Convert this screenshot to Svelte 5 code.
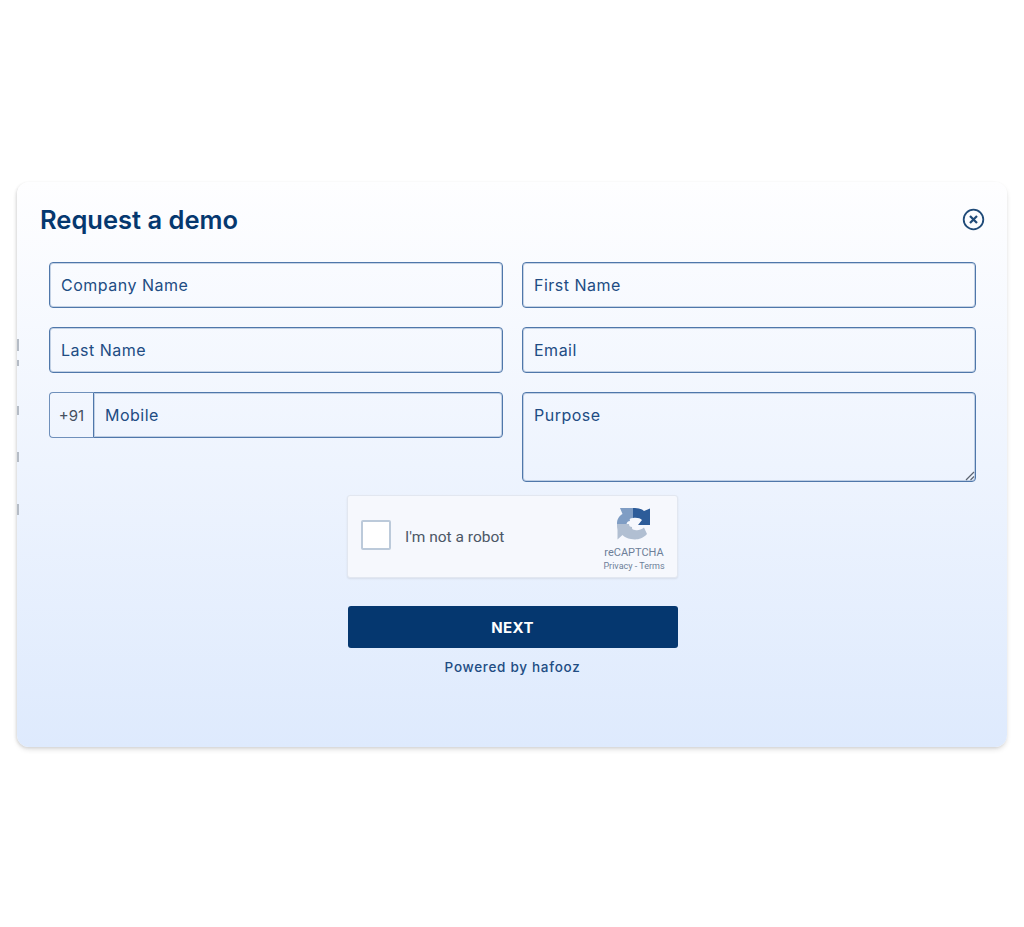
<script>
  const marks = [
    { top: 157, h: 12 },
    { top: 178, h: 6 },
    { top: 224, h: 9 },
    { top: 270, h: 10 },
    { top: 322, h: 11 }
  ];
</script>

<div class="page">
  <section class="modal">
    {#each marks as m}
      <i class="mark" style="top:{m.top}px;height:{m.h}px"></i>
    {/each}

    <header class="head">
      <h1>Request a demo</h1>
      <button class="close" aria-label="Close">
        <svg width="23" height="23" viewBox="0 0 23 23" fill="none" stroke="#1f4a78">
          <circle cx="11.5" cy="11.5" r="9.8" stroke-width="1.8" />
          <path d="M8 8l7 7M15 8l-7 7" stroke-width="2.2" />
        </svg>
      </button>
    </header>

    <form class="fields">
      <div class="field">Company Name</div>
      <div class="field">First Name</div>
      <div class="field">Last Name</div>
      <div class="field">Email</div>
      <div class="phone">
        <span class="code">+91</span>
        <div class="field mobile">Mobile</div>
      </div>
      <div class="field purpose">
        Purpose
        <svg class="grip" width="10" height="10" viewBox="0 0 10 10" stroke="#5c6470" stroke-width="1.2">
          <path d="M1 9L9 1M5.500 9L9 5.500" />
        </svg>
      </div>
    </form>

    <div class="captcha">
      <span class="check"></span>
      <span class="robot">I'm not a robot</span>
      <div class="brand">
        <svg width="36" height="34" viewBox="0 0 36 34">
          <path fill="#2d5c99" d="M17 1C21 .5 25 1.500 28 4L34 1.500V18H22L26 13C24 11.500 22 10.500 17 11Z" />
          <path fill="#7f9dc4" d="M17 1V11C14 11 13 12 14 14C12 14 11 15 10.500 17H1C1 12 3 9 6.500 7L4 1Z" />
          <path fill="#b1bfd2" d="M1 17H13C13 19 14 20 16 20C15.500 22 17 23 19 23C22 23.500 25 23 28 20.500L31 27C26 32.500 20 33 15 32C11 31.500 8.500 30 6.500 28L1.500 32.500V23C1 21 1 19 1 17Z" />
        </svg>
        <span class="rc">reCAPTCHA</span>
        <span class="terms">Privacy - Terms</span>
      </div>
    </div>

    <button class="next">NEXT</button>
    <p class="powered">Powered by hafooz</p>
  </section>
</div>

<style>
  :global(body) {
    background: #fff;
  }

  .page {
    padding: 182px 17px 180px;
    font-family: "Inter", "Liberation Sans", sans-serif;
    color: #214c83;
  }

  .modal {
    position: relative;
    height: 565px;
    box-sizing: border-box;
    padding: 0 31px 0 32px;
    border-radius: 12px;
    background: linear-gradient(#fefeff, #deeafd);
    box-shadow: -1px 1px 3px rgba(0, 0, 0, 0.1), 0 3px 5px rgba(0, 0, 0, 0.1);
  }

  .mark {
    position: absolute;
    left: 0;
    width: 2px;
    background: #b5bcc6;
  }

  .head {
    display: flex;
    justify-content: space-between;
    align-items: center;
    height: 74px;
    margin: 0 -9px 6px -9px;
  }

  h1 {
    margin: 0;
    font-size: 25.5px;
    font-weight: 600;
    letter-spacing: 0;
    color: #05386f;
  }

  .close {
    display: flex;
    padding: 0;
    border: 0;
    background: none;
  }

  .fields {
    display: grid;
    grid-template-columns: 1fr 1fr;
    gap: 19px;
    align-items: start;
  }

  .field {
    position: relative;
    flex: 1;
    height: 46px;
    box-sizing: border-box;
    padding-left: 11px;
    display: flex;
    align-items: center;
    border: 1px solid #4f77aa;
    border-radius: 4px;
    box-shadow: inset 0 0 0 1px rgba(79, 119, 170, 0.3);
    font-size: 16px;
    letter-spacing: 0.5px;
  }

  .phone {
    display: flex;
  }

  .code {
    width: 44px;
    height: 46px;
    box-sizing: border-box;
    display: flex;
    align-items: center;
    justify-content: center;
    border: 1px solid #6f90bb;
    border-right: 0;
    border-radius: 4px 0 0 4px;
    font-size: 15px;
    color: #45505f;
  }

  .mobile {
    border-radius: 0 4px 4px 0;
  }

  .purpose {
    height: 90px;
    align-items: flex-start;
    padding-top: 12px;
  }

  .grip {
    position: absolute;
    right: 0;
    bottom: 0;
  }

  .captcha {
    display: flex;
    align-items: center;
    width: 331px;
    height: 83px;
    box-sizing: border-box;
    margin: 13px auto 0;
    padding: 0 11px 0 13px;
    background: #f6f8fd;
    border: 1px solid #e2e7f0;
    border-radius: 3px;
    box-shadow: 0 1px 2px rgba(0, 0, 0, 0.08);
    font-family: "Roboto", sans-serif;
    color: #4c5766;
  }

  .check {
    width: 30px;
    height: 30px;
    box-sizing: border-box;
    margin-top: -4px;
    border: 2px solid #bccada;
    border-radius: 2px;
    background: #fff;
  }

  .robot {
    margin-left: 14px;
    font-size: 15.5px;
  }

  .brand {
    margin-left: auto;
    width: 64px;
    padding-top: 6px;
    display: flex;
    flex-direction: column;
    align-items: center;
    color: #6d7f99;
  }

  .rc {
    margin-top: 5px;
    font-size: 11px;
    line-height: 14px;
  }

  .terms {
    font-size: 9px;
    line-height: 12px;
    white-space: nowrap;
  }

  .next {
    display: block;
    width: 330px;
    height: 42px;
    margin: 28px auto 0;
    padding: 0;
    border: 0;
    border-radius: 3px;
    background: #05376f;
    color: #fff;
    font: 700 15px "Inter", sans-serif;
    letter-spacing: 0.4px;
  }

  .powered {
    margin: 11px 0 0;
    text-align: center;
    font-size: 13.5px;
    font-weight: 500;
    letter-spacing: 0.7px;
    line-height: 16px;
  }
</style>
